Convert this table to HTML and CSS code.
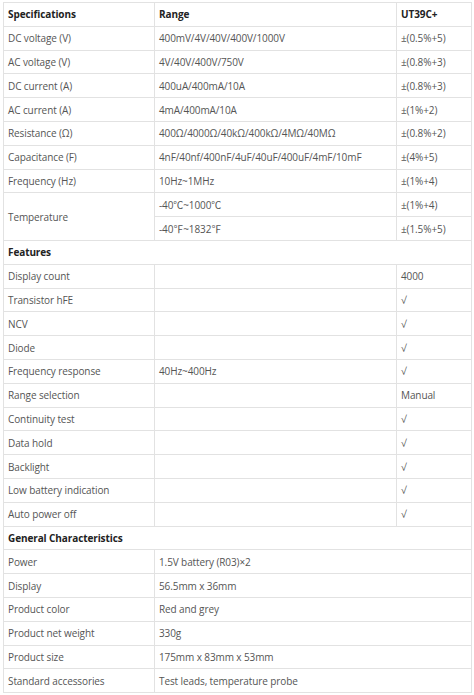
FILE: index.html
```html
<!DOCTYPE html>
<html>
<head>
<meta charset="utf-8">
<link rel="stylesheet" href="styles.css">
</head>
<body>
<table class="spec">
  <colgroup><col class="c1"><col class="c2"><col class="c3"></colgroup>
  <tr class="head"><td>Specifications</td><td>Range</td><td>UT39C+</td></tr>
  <tr><td>DC voltage (V)</td><td>400mV/4V/40V/400V/1000V</td><td>±(0.5%+5)</td></tr>
  <tr><td>AC voltage (V)</td><td>4V/40V/400V/750V</td><td>±(0.8%+3)</td></tr>
  <tr><td>DC current (A)</td><td>400uA/400mA/10A</td><td>±(0.8%+3)</td></tr>
  <tr><td>AC current (A)</td><td>4mA/400mA/10A</td><td>±(1%+2)</td></tr>
  <tr><td>Resistance (Ω)</td><td>400Ω/4000Ω/40kΩ/400kΩ/4MΩ/40MΩ</td><td>±(0.8%+2)</td></tr>
  <tr><td>Capacitance (F)</td><td>4nF/40nf/400nF/4uF/40uF/400uF/4mF/10mF</td><td>±(4%+5)</td></tr>
  <tr><td>Frequency (Hz)</td><td>10Hz~1MHz</td><td>±(1%+4)</td></tr>
  <tr><td rowspan="2">Temperature</td><td>-40℃~1000℃</td><td>±(1%+4)</td></tr>
  <tr><td>-40℉~1832℉</td><td>±(1.5%+5)</td></tr>
  <tr class="section"><td colspan="3">Features</td></tr>
  <tr><td>Display count</td><td></td><td>4000</td></tr>
  <tr><td>Transistor hFE</td><td></td><td>√</td></tr>
  <tr><td>NCV</td><td></td><td>√</td></tr>
  <tr><td>Diode</td><td></td><td>√</td></tr>
  <tr><td>Frequency response</td><td>40Hz~400Hz</td><td>√</td></tr>
  <tr><td>Range selection</td><td></td><td>Manual</td></tr>
  <tr><td>Continuity test</td><td></td><td>√</td></tr>
  <tr><td>Data hold</td><td></td><td>√</td></tr>
  <tr><td>Backlight</td><td></td><td>√</td></tr>
  <tr><td>Low battery indication</td><td></td><td>√</td></tr>
  <tr><td>Auto power off</td><td></td><td>√</td></tr>
  <tr class="section"><td colspan="3">General Characteristics</td></tr>
  <tr><td>Power</td><td colspan="2">1.5V battery (R03)×2</td></tr>
  <tr><td>Display</td><td colspan="2">56.5mm x 36mm</td></tr>
  <tr><td>Product color</td><td colspan="2">Red and grey</td></tr>
  <tr><td>Product net weight</td><td colspan="2">330g</td></tr>
  <tr><td>Product size</td><td colspan="2">175mm x 83mm x 53mm</td></tr>
  <tr><td>Standard accessories</td><td colspan="2">Test leads, temperature probe</td></tr>
</table>
</body>
</html>
```
FILE: styles.css
```css
html, body {
  margin: 0;
  padding: 0;
  background: #fff;
}
body {
  padding: 2px 0 0 3px;
}
.spec {
  border-collapse: collapse;
  table-layout: fixed;
  width: 468px;
  font-family: "Open Sans", "Noto Sans CJK SC", sans-serif;
  font-size: 10px;
  letter-spacing: -0.1px;
  color: #555;
}
.c1 { width: 151px; }
.c2 { width: 242px; }
.c3 { width: 75px; }
.spec td {
  border: 1px solid #e2e2e2;
  height: 23.8px;
  padding: 0 0 0 4px;
  box-sizing: border-box;
  vertical-align: middle;
  white-space: nowrap;
  overflow: hidden;
}
.head td, .section td {
  font-weight: bold;
  color: #222;
}
```
